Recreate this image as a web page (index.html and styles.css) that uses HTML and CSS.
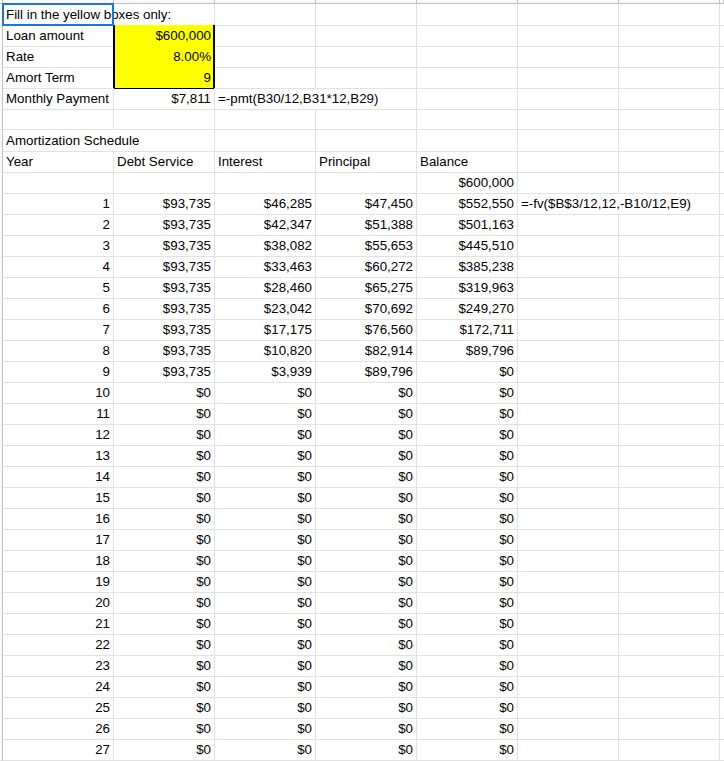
FILE: index.html
```html
<!DOCTYPE html>
<html>
<head>
<meta charset="utf-8">
<link rel="stylesheet" href="styles.css">
</head>
<body>
<div class="sheet">
<div class="r hd"><div></div><div></div><div></div><div></div><div></div><div></div><div></div><div></div><div></div></div>
<div class="r"><div></div><div class="sel o">Fill in the yellow boxes only:</div><div class="bb"></div><div></div><div></div><div></div><div></div><div></div><div></div></div>
<div class="r"><div></div><div class="bl">Loan amount</div><div class="n y">$600,000</div><div></div><div></div><div></div><div></div><div></div><div></div></div>
<div class="r"><div></div><div class="bl">Rate</div><div class="n y">8.00%</div><div></div><div></div><div></div><div></div><div></div><div></div></div>
<div class="r"><div></div><div class="bl">Amort Term</div><div class="n y">9</div><div></div><div></div><div></div><div></div><div></div><div></div></div>
<div class="r"><div></div><div>Monthly Payment</div><div class="n">$7,811</div><div class="o">=-pmt(B30/12,B31*12,B29)</div><div></div><div></div><div></div><div></div><div></div></div>
<div class="r"><div></div><div></div><div></div><div></div><div></div><div></div><div></div><div></div><div></div></div>
<div class="r"><div></div><div class="o">Amortization Schedule</div><div></div><div></div><div></div><div></div><div></div><div></div><div></div></div>
<div class="r"><div></div><div>Year</div><div>Debt Service</div><div>Interest</div><div>Principal</div><div>Balance</div><div></div><div></div><div></div></div>
<div class="r"><div></div><div></div><div></div><div></div><div></div><div class="n">$600,000</div><div></div><div></div><div></div></div>
<div class="r"><div></div><div class="n">1</div><div class="n">$93,735</div><div class="n">$46,285</div><div class="n">$47,450</div><div class="n">$552,550</div><div class="o">=-fv($B$3/12,12,-B10/12,E9)</div><div></div><div></div></div>
<div class="r"><div></div><div class="n">2</div><div class="n">$93,735</div><div class="n">$42,347</div><div class="n">$51,388</div><div class="n">$501,163</div><div></div><div></div><div></div></div>
<div class="r"><div></div><div class="n">3</div><div class="n">$93,735</div><div class="n">$38,082</div><div class="n">$55,653</div><div class="n">$445,510</div><div></div><div></div><div></div></div>
<div class="r"><div></div><div class="n">4</div><div class="n">$93,735</div><div class="n">$33,463</div><div class="n">$60,272</div><div class="n">$385,238</div><div></div><div></div><div></div></div>
<div class="r"><div></div><div class="n">5</div><div class="n">$93,735</div><div class="n">$28,460</div><div class="n">$65,275</div><div class="n">$319,963</div><div></div><div></div><div></div></div>
<div class="r"><div></div><div class="n">6</div><div class="n">$93,735</div><div class="n">$23,042</div><div class="n">$70,692</div><div class="n">$249,270</div><div></div><div></div><div></div></div>
<div class="r"><div></div><div class="n">7</div><div class="n">$93,735</div><div class="n">$17,175</div><div class="n">$76,560</div><div class="n">$172,711</div><div></div><div></div><div></div></div>
<div class="r"><div></div><div class="n">8</div><div class="n">$93,735</div><div class="n">$10,820</div><div class="n">$82,914</div><div class="n">$89,796</div><div></div><div></div><div></div></div>
<div class="r"><div></div><div class="n">9</div><div class="n">$93,735</div><div class="n">$3,939</div><div class="n">$89,796</div><div class="n">$0</div><div></div><div></div><div></div></div>
<div class="r"><div></div><div class="n">10</div><div class="n">$0</div><div class="n">$0</div><div class="n">$0</div><div class="n">$0</div><div></div><div></div><div></div></div>
<div class="r"><div></div><div class="n">11</div><div class="n">$0</div><div class="n">$0</div><div class="n">$0</div><div class="n">$0</div><div></div><div></div><div></div></div>
<div class="r"><div></div><div class="n">12</div><div class="n">$0</div><div class="n">$0</div><div class="n">$0</div><div class="n">$0</div><div></div><div></div><div></div></div>
<div class="r"><div></div><div class="n">13</div><div class="n">$0</div><div class="n">$0</div><div class="n">$0</div><div class="n">$0</div><div></div><div></div><div></div></div>
<div class="r"><div></div><div class="n">14</div><div class="n">$0</div><div class="n">$0</div><div class="n">$0</div><div class="n">$0</div><div></div><div></div><div></div></div>
<div class="r"><div></div><div class="n">15</div><div class="n">$0</div><div class="n">$0</div><div class="n">$0</div><div class="n">$0</div><div></div><div></div><div></div></div>
<div class="r"><div></div><div class="n">16</div><div class="n">$0</div><div class="n">$0</div><div class="n">$0</div><div class="n">$0</div><div></div><div></div><div></div></div>
<div class="r"><div></div><div class="n">17</div><div class="n">$0</div><div class="n">$0</div><div class="n">$0</div><div class="n">$0</div><div></div><div></div><div></div></div>
<div class="r"><div></div><div class="n">18</div><div class="n">$0</div><div class="n">$0</div><div class="n">$0</div><div class="n">$0</div><div></div><div></div><div></div></div>
<div class="r"><div></div><div class="n">19</div><div class="n">$0</div><div class="n">$0</div><div class="n">$0</div><div class="n">$0</div><div></div><div></div><div></div></div>
<div class="r"><div></div><div class="n">20</div><div class="n">$0</div><div class="n">$0</div><div class="n">$0</div><div class="n">$0</div><div></div><div></div><div></div></div>
<div class="r"><div></div><div class="n">21</div><div class="n">$0</div><div class="n">$0</div><div class="n">$0</div><div class="n">$0</div><div></div><div></div><div></div></div>
<div class="r"><div></div><div class="n">22</div><div class="n">$0</div><div class="n">$0</div><div class="n">$0</div><div class="n">$0</div><div></div><div></div><div></div></div>
<div class="r"><div></div><div class="n">23</div><div class="n">$0</div><div class="n">$0</div><div class="n">$0</div><div class="n">$0</div><div></div><div></div><div></div></div>
<div class="r"><div></div><div class="n">24</div><div class="n">$0</div><div class="n">$0</div><div class="n">$0</div><div class="n">$0</div><div></div><div></div><div></div></div>
<div class="r"><div></div><div class="n">25</div><div class="n">$0</div><div class="n">$0</div><div class="n">$0</div><div class="n">$0</div><div></div><div></div><div></div></div>
<div class="r"><div></div><div class="n">26</div><div class="n">$0</div><div class="n">$0</div><div class="n">$0</div><div class="n">$0</div><div></div><div></div><div></div></div>
<div class="r"><div></div><div class="n">27</div><div class="n">$0</div><div class="n">$0</div><div class="n">$0</div><div class="n">$0</div><div></div><div></div><div></div></div>
</div>
</body>
</html>
```

FILE: styles.css
```css
* { box-sizing: border-box; }
html, body { margin: 0; background: #fff; }
body {
  font-family: "Liberation Sans", Arial, sans-serif;
  font-size: 13.33px;
  color: #000;
  width: 724px;
  height: 761px;
  overflow: hidden;
}
.sheet { display: flex; flex-direction: column; }
.r {
  display: grid;
  grid-template-columns: 3px 111px repeat(6, 101px) 1fr;
  height: 21px;
  flex: none;
}
.r > div {
  border-right: 1px solid #e2e2e2;
  border-bottom: 1px solid #e2e2e2;
  padding: 1px 3px 0;
  line-height: 20px;
  white-space: nowrap;
  min-width: 0;
}
.r > div:first-child {
  background: #f8f9fa;
  border-right-color: #c0c0c0;
  padding: 0;
}
.r.hd { height: 4px; }
.r.hd > div {
  background: #f8f9fa;
  border-right-color: #c0c0c0;
  border-bottom-color: #c0c0c0;
  padding: 0;
}
.r > .n { text-align: right; }
.r > .o { border-right-color: transparent; }
.r > .bl { border-right-color: #000; }
.r > .bb { border-bottom-color: #000; }
.r > .y {
  background: #ffff00;
  border-right-color: #000;
  border-bottom-color: #000;
  box-shadow: inset 1px 0 0 #000, inset -1px 0 0 #000;
}
.sel { position: relative; }
.sel::after {
  content: "";
  position: absolute;
  inset: -1px;
  border: 2px solid #1a73e8;
}
```
